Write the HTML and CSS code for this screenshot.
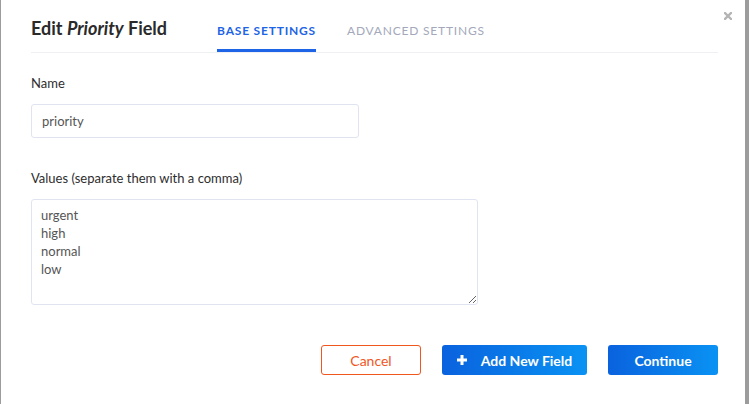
FILE: index.html
```html
<!DOCTYPE html>
<html lang="en">
<head>
    <meta charset="UTF-8">
    <title>Edit Priority Field</title>
    <link rel="stylesheet" href="styles.css">
</head>
<body>

<div class="modal">
    <button class="close" aria-label="Close">
        <svg width="8" height="8" viewBox="0 0 8 8"><path d="M1 1L7 7M7 1L1 7" stroke="#b4b4b4" stroke-width="2.4" stroke-linecap="square"/></svg>
    </button>

    <div class="modal-header">
        <h2>Edit <em>Priority</em> Field</h2>
        <nav class="tabs">
            <a class="tab active">Base Settings</a>
            <a class="tab">Advanced Settings</a>
        </nav>
    </div>

    <div class="modal-body">
        <div class="field">
            <label for="name">Name</label>
            <input type="text" id="name" class="name-input" value="priority">
        </div>

        <div class="field">
            <label for="values">Values (separate them with a comma)</label>
            <textarea id="values" class="values-input">urgent
high
normal
low</textarea>
        </div>
    </div>

    <div class="modal-footer">
        <button class="btn btn-cancel">Cancel</button>
        <button class="btn btn-primary">
            <svg width="10" height="10" viewBox="0 0 10 10"><path d="M5 0V10M0 5H10" stroke="#fff" stroke-width="3"/></svg>
            Add New Field
        </button>
        <button class="btn btn-primary btn-continue">Continue</button>
    </div>
</div>

</body>
</html>
```

FILE: styles.css
```css
body {
    margin: 0;
    background-color: #9c9c9c;
    font-family: 'Lato', 'Liberation Sans', sans-serif;
    color: #333;
}
.modal {
    position: relative;
    margin-left: 1px;
    width: 744px;
    height: 404px;
    box-sizing: border-box;
    padding: 0 27px 0 30px;
    background-color: #fff;
}
.close {
    position: absolute;
    top: 12px;
    right: 13px;
    padding: 0;
    border: none;
    background: none;
    line-height: 0;
}
.modal-header {
    display: flex;
    align-items: flex-start;
    height: 53px;
    box-sizing: border-box;
    border-bottom: 1px solid #eef0f4;
}
h2 {
    margin: 0;
    padding-top: 17px;
    font-size: 18px;
    line-height: 22px;
    font-weight: bold;
    color: #2a2a2a;
}
h2 em {
    font-style: italic;
}
.tabs {
    display: flex;
    gap: 31px;
    margin-left: 50px;
}
.tab {
    display: block;
    padding: 24px 0 11px;
    font-size: 12px;
    line-height: 14px;
    letter-spacing: 0.8px;
    text-transform: uppercase;
    color: #a3a8ba;
    border-bottom: 3px solid transparent;
}
.tab.active {
    color: #1d64e6;
    font-weight: bold;
    border-bottom-color: #1d64e6;
}
.modal-body {
    padding-top: 22px;
}
.field {
    margin-bottom: 32px;
}
.field:last-child {
    margin-bottom: 0;
}
label {
    display: block;
    font-size: 13px;
    line-height: 16px;
    color: #2e2e2e;
    margin-bottom: 13px;
}
.name-input,
.values-input {
    display: block;
    box-sizing: border-box;
    border: 1px solid #dfe4f0;
    border-radius: 3px;
    font-family: inherit;
    font-size: 13px;
    color: #555;
    background-color: #fff;
}
.name-input {
    width: 328px;
    height: 34px;
    padding: 0 10px;
}
.values-input {
    width: 447px;
    height: 106px;
    padding: 6px 9px;
    line-height: 18px;
    resize: vertical;
}
.modal-footer {
    display: flex;
    justify-content: flex-end;
    gap: 21px;
    margin-top: 40px;
}
.btn {
    display: flex;
    align-items: center;
    justify-content: center;
    gap: 14px;
    height: 30px;
    box-sizing: border-box;
    border-radius: 3px;
    font-family: inherit;
    font-size: 14px;
    cursor: pointer;
}
.btn-cancel {
    width: 100px;
    background-color: #fff;
    color: #f0561e;
    border: 1px solid #f0561e;
}
.btn-primary {
    width: 145px;
    border: none;
    color: #fff;
    font-weight: bold;
    background: linear-gradient(to right, #0a62de, #0a92f3);
}
.btn-continue {
    width: 110px;
}
```
